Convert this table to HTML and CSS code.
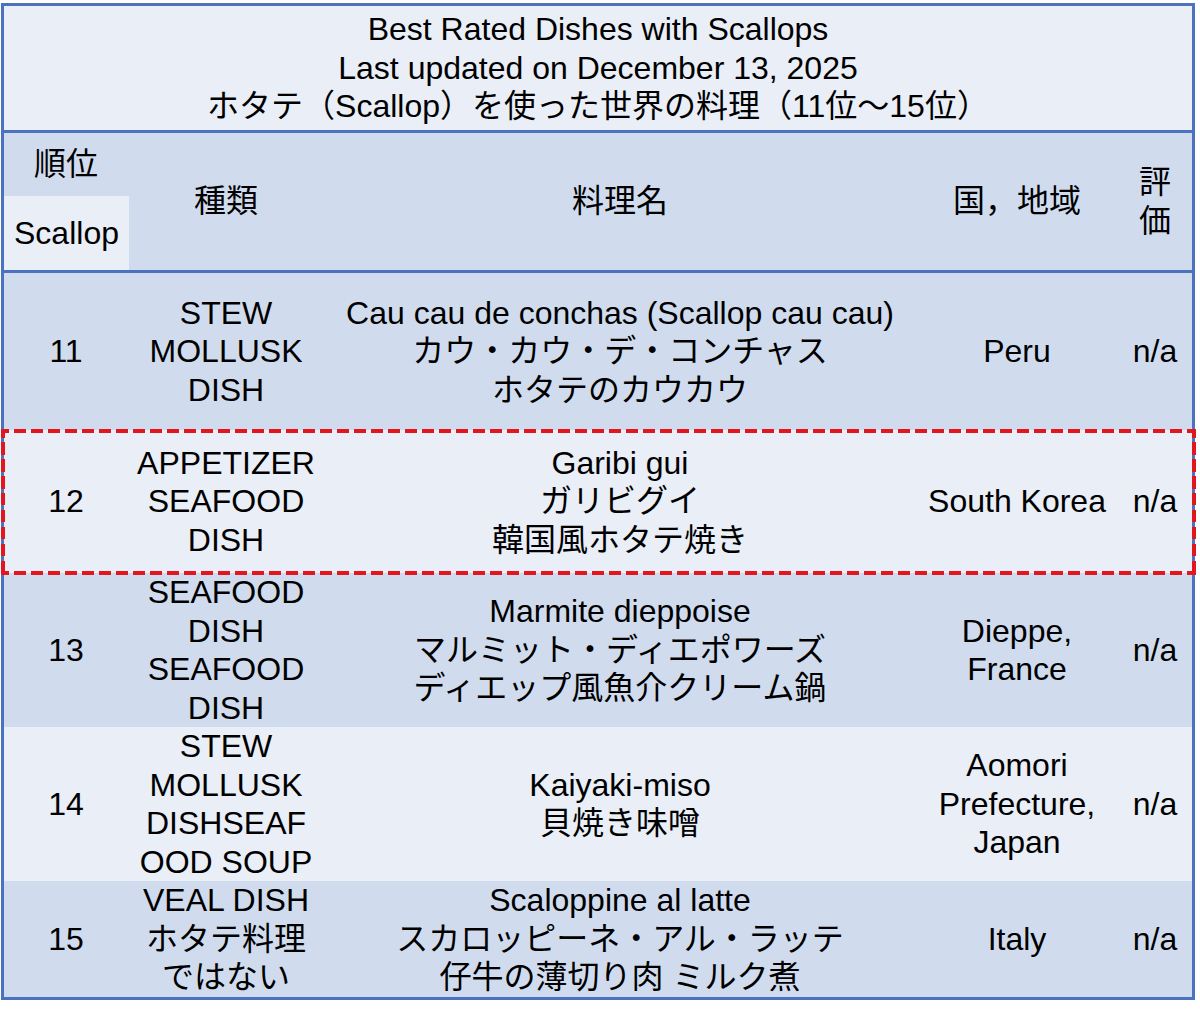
FILE: index.html
```html
<!DOCTYPE html>
<html lang="ja">
<head>
<meta charset="utf-8">
<title>Best Rated Dishes with Scallops</title>
<link rel="stylesheet" href="styles.css">
</head>
<body>
<div class="sheet">
  <div class="title">
    <div>Best Rated Dishes with Scallops</div>
    <div>Last updated on December 13, 2025</div>
    <div>ホタテ（Scallop）を使った世界の料理（11位～15位）</div>
  </div>
  <div class="row head">
    <div class="cell rank-head">
      <div class="rank-label">順位</div>
      <div class="rank-sub">Scallop</div>
    </div>
    <div class="cell">種類</div>
    <div class="cell">料理名</div>
    <div class="cell">国，地域</div>
    <div class="cell">評<br>価</div>
  </div>
  <div class="row dark h157">
    <div class="cell">11</div>
    <div class="cell">STEW<br>MOLLUSK<br>DISH</div>
    <div class="cell">Cau cau de conchas (Scallop cau cau)<br>カウ・カウ・デ・コンチャス<br>ホタテのカウカウ</div>
    <div class="cell">Peru</div>
    <div class="cell">n/a</div>
  </div>
  <div class="row light h143 highlight">
    <div class="cell">12</div>
    <div class="cell">APPETIZER<br>SEAFOOD<br>DISH</div>
    <div class="cell">Garibi gui<br>ガリビグイ<br>韓国風ホタテ焼き</div>
    <div class="cell">South Korea</div>
    <div class="cell">n/a</div>
  </div>
  <div class="row dark h154">
    <div class="cell">13</div>
    <div class="cell">SEAFOOD<br>DISH<br>SEAFOOD<br>DISH</div>
    <div class="cell">Marmite dieppoise<br>マルミット・ディエポワーズ<br>ディエップ風魚介クリーム鍋</div>
    <div class="cell">Dieppe,<br>France</div>
    <div class="cell">n/a</div>
  </div>
  <div class="row light h154">
    <div class="cell">14</div>
    <div class="cell">STEW<br>MOLLUSK<br>DISHSEAF<br>OOD SOUP</div>
    <div class="cell">Kaiyaki-miso<br>貝焼き味噌</div>
    <div class="cell">Aomori<br>Prefecture,<br>Japan</div>
    <div class="cell">n/a</div>
  </div>
  <div class="row dark h116">
    <div class="cell">15</div>
    <div class="cell">VEAL DISH<br>ホタテ料理<br>ではない</div>
    <div class="cell">Scaloppine al latte<br>スカロッピーネ・アル・ラッテ<br>仔牛の薄切り肉 ミルク煮</div>
    <div class="cell">Italy</div>
    <div class="cell">n/a</div>
  </div>
</div>
</body>
</html>
```
FILE: styles.css
```css
html, body {
  margin: 0;
  padding: 0;
  background: #ffffff;
}

body {
  font-family: "Liberation Sans", "Noto Sans CJK JP", sans-serif;
  font-size: 32px;
  line-height: 38.5px;
  color: #000000;
}

.sheet {
  box-sizing: border-box;
  width: 1194px;
  height: 997px;
  margin: 3px 0 0 1px;
  border: 3px solid #4a72bf;
  display: flex;
  flex-direction: column;
}

.title {
  height: 124px;
  box-sizing: content-box;
  background: #e9eef7;
  border-bottom: 3px solid #4a72bf;
  display: flex;
  flex-direction: column;
  justify-content: center;
  align-items: center;
  text-align: center;
  white-space: nowrap;
}

.row {
  display: grid;
  grid-template-columns: 124px 196px 592px 202px 74px;
  text-align: center;
  white-space: nowrap;
}

.cell {
  display: flex;
  flex-direction: column;
  justify-content: center;
  align-items: center;
}

.head {
  height: 137px;
  background: #d0dcee;
  border-bottom: 3px solid #4a72bf;
}

.rank-head {
  justify-content: stretch;
  align-items: stretch;
}

.rank-label {
  height: 63px;
  display: flex;
  align-items: center;
  justify-content: center;
}

.rank-sub {
  flex: 1;
  background: #e9eef7;
  display: flex;
  align-items: center;
  justify-content: center;
  margin-right: -1px;
}

.dark {
  background: #d0dcee;
}

.light {
  background: #e9eef7;
}

.h157 { height: 157px; }
.h143 { height: 143px; }
.h154 { height: 154px; }
.h116 { flex: 1; }

.highlight {
  position: relative;
}

.highlight::after {
  content: "";
  position: absolute;
  left: -3px;
  right: -4px;
  top: -1px;
  bottom: -2px;
  pointer-events: none;
  background:
    repeating-linear-gradient(90deg, #e2161e 0 8.5px, transparent 8.5px 13px, #e2161e 13px 17px) left top / 100% 4px no-repeat,
    repeating-linear-gradient(90deg, #e2161e 0 8.5px, transparent 8.5px 13px, #e2161e 13px 17px) left bottom / 100% 4px no-repeat,
    repeating-linear-gradient(180deg, #e2161e 0 8.5px, transparent 8.5px 13px, #e2161e 13px 17px) left top / 4px 100% no-repeat,
    repeating-linear-gradient(180deg, #e2161e 0 8.5px, transparent 8.5px 13px, #e2161e 13px 17px) right top / 4px 100% no-repeat;
}
```
